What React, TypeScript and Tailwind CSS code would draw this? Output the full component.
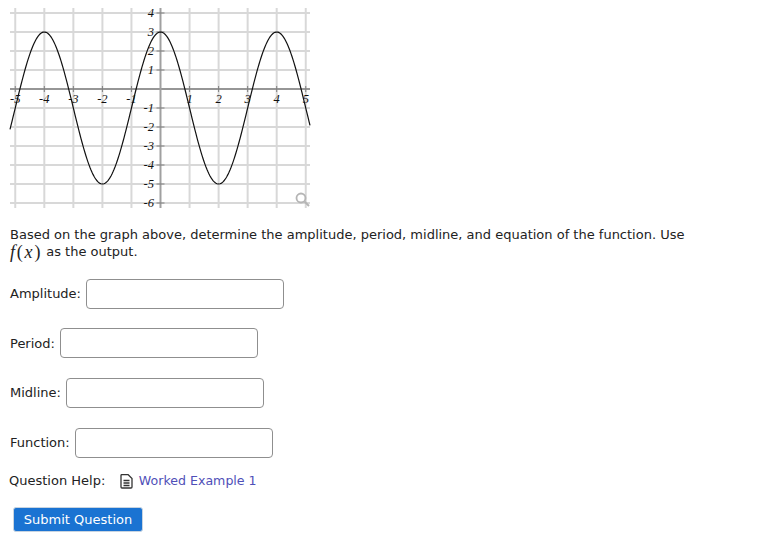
const xs = [-5, -4, -3, -2, -1, 1, 2, 3, 4, 5];
const ys = [4, 3, 2, 1, -1, -2, -3, -4, -5, -6];

const px = (x: number) => 160.5 + x * 29.05;
const py = (y: number) => 89 - y * 19;
const serif = "Liberation Serif, serif";

function curve() {
  let d = "";
  for (let sx = 10; sx <= 310; sx += 1) {
    const x = (sx - 160.5) / 29.05;
    const y = 4 * Math.cos((Math.PI * x) / 2) - 1;
    d += (d ? "L" : "M") + sx + " " + py(y).toFixed(2);
  }
  return d;
}

function Graph() {
  return (
    <svg width="320" height="212" className="block">
      {xs.map((x) => (
        <line key={x} x1={px(x)} x2={px(x)} y1="8" y2="208" stroke="#d8d8d8" strokeWidth="2" />
      ))}
      {ys.map((y) => (
        <line key={y} x1="10" x2="310" y1={py(y)} y2={py(y)} stroke="#d8d8d8" strokeWidth="2" />
      ))}
      <line x1="10" x2="310" y1="89" y2="89" stroke="#969696" strokeWidth="2" />
      <line x1={px(0)} x2={px(0)} y1="8" y2="208" stroke="#a0a0a0" strokeWidth="2" />
      {xs.map((x) => (
        <line key={x} x1={px(x)} x2={px(x)} y1="86" y2="92" stroke="#808080" strokeWidth="1" />
      ))}
      {ys.map((y) => (
        <line key={y} x1={px(0) - 4} x2={px(0) + 4} y1={py(y)} y2={py(y)} stroke="#808080" strokeWidth="1" />
      ))}
      {xs.map((x) => (
        <text key={x} x={px(x)} y="102.5" textAnchor="middle" fontSize="12.5" fontStyle="italic" fontFamily={serif} fill="#111">
          {x < 0 ? "-" + -x : x}
        </text>
      ))}
      {ys.map((y) => (
        <text key={y} x="154" y={py(y) + 4} textAnchor="end" fontSize="12.5" fontStyle="italic" fontFamily={serif} fill="#111">
          {y}
        </text>
      ))}
      <path d={curve()} fill="none" stroke="#111" strokeWidth="1.2" />
      <circle cx="301" cy="198" r="4.5" fill="none" stroke="#b5b5b5" strokeWidth="1.8" />
      <line x1="304.5" y1="201.5" x2="309" y2="206" stroke="#b5b5b5" strokeWidth="2" />
    </svg>
  );
}

function Field({ label }: { label: string }) {
  return (
    <div className="flex items-center gap-[5px] pl-[10px] h-[30px]">
      <span>{label}</span>
      <div className="w-[198px] h-[30px] bg-white border border-[#8f8f8f] rounded-[4px]" />
    </div>
  );
}

export default function App() {
  return (
    <div className="w-[765px] h-[544px] bg-white overflow-hidden text-[#222] text-[13px] font-['DejaVu_Sans',sans-serif]">
      <Graph />
      <div className="mt-[14px] pl-[10px] whitespace-nowrap leading-[17px]">
        <p>Based on the graph above, determine the amplitude, period, midline, and equation of the function. Use</p>
        <p className="flex items-center h-[17px]">
          <span className="leading-none mt-[1px] mr-[4px] font-['Liberation_Serif',serif] text-[18px] tracking-[1.8px]">
            <i>f</i>(<i>x</i>)
          </span>
          as the output.
        </p>
      </div>
      <div className="mt-[18.8px] flex flex-col gap-[19.6px]">
        <Field label="Amplitude:" />
        <Field label="Period:" />
        <Field label="Midline:" />
        <Field label="Function:" />
      </div>
      <div className="mt-[15px] pl-[9px] flex items-center h-[17px]">
        <span>Question Help:</span>
        <svg width="13" height="15" viewBox="0 0 13 15" className="ml-[14.500px] mr-[6px]" fill="none" stroke="#333" strokeWidth="1.3">
          <path d="M1 1.500a1 1 0 0 1 1-1h6l4 4v8.500a1 1 0 0 1-1 1H2a1 1 0 0 1-1-1z" />
          <path d="M3.500 6.500h6M3.500 9h6M3.500 11.500h6" />
        </svg>
        <a className="text-[#4f4fb8] text-[12.6px]">Worked Example 1</a>
      </div>
      <button className="mt-[17.4px] ml-[13px] block w-[130px] h-[25px] bg-[#1a73d2] border border-[#c8d4e0] rounded-[3px] text-white font-medium">
        Submit Question
      </button>
    </div>
  );
}
